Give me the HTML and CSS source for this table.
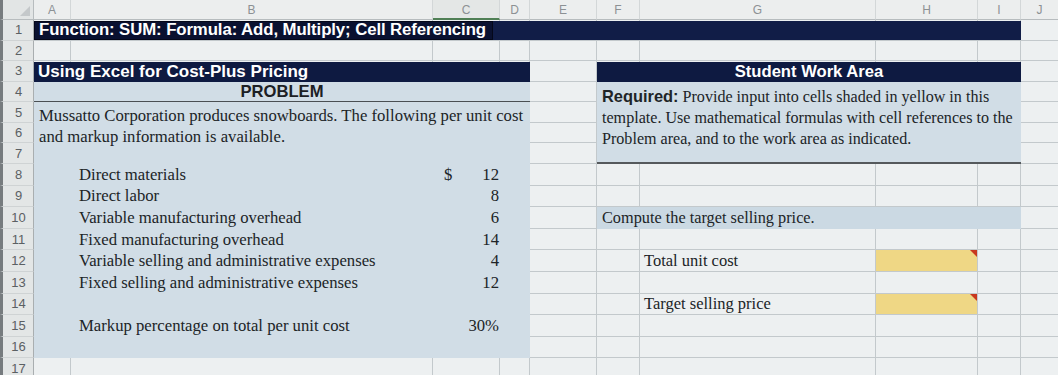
FILE: index.html
```html
<!DOCTYPE html>
<html lang="en">
<head>
<meta charset="utf-8">
<title>Cost-Plus Pricing</title>
<link rel="stylesheet" href="styles.css">
</head>
<body>
<div class="sheet">
  <div class="corner"></div>
  <div class="colhdr">A</div>
  <div class="colhdr">B</div>
  <div class="colhdr sel">C</div>
  <div class="colhdr">D</div>
  <div class="colhdr">E</div>
  <div class="colhdr">F</div>
  <div class="colhdr">G</div>
  <div class="colhdr">H</div>
  <div class="colhdr">I</div>
  <div class="colhdr last">J</div>

  <div class="rowhdr r1">1</div>
  <div class="rowhdr r2">2</div>
  <div class="rowhdr r3">3</div>
  <div class="rowhdr r4">4</div>
  <div class="rowhdr r5">5</div>
  <div class="rowhdr r6">6</div>
  <div class="rowhdr r7">7</div>
  <div class="rowhdr r8">8</div>
  <div class="rowhdr r9">9</div>
  <div class="rowhdr r10">10</div>
  <div class="rowhdr r11">11</div>
  <div class="rowhdr r12">12</div>
  <div class="rowhdr r13">13</div>
  <div class="rowhdr r14">14</div>
  <div class="rowhdr r15">15</div>
  <div class="rowhdr r16">16</div>
  <div class="rowhdr r17">17</div>

  <div class="title"><span class="title-text">Function: SUM: Formula: Add, Multiply; Cell Referencing</span></div>

  <div class="bar bar-left">Using Excel for Cost-Plus Pricing</div>
  <div class="bar bar-right">Student Work Area</div>

  <div class="problem">
    <div class="problem-head">PROBLEM</div>
    <div class="problem-text">Mussatto Corporation produces snowboards. The following per unit cost<br>and markup information is available.</div>
    <div class="item-label i1">Direct materials</div>
    <div class="item-value i1"><span>$</span><span>12</span></div>
    <div class="item-label i2">Direct labor</div>
    <div class="item-value i2"><span></span><span>8</span></div>
    <div class="item-label i3">Variable manufacturing overhead</div>
    <div class="item-value i3"><span></span><span>6</span></div>
    <div class="item-label i4">Fixed manufacturing overhead</div>
    <div class="item-value i4"><span></span><span>14</span></div>
    <div class="item-label i5">Variable selling and administrative expenses</div>
    <div class="item-value i5"><span></span><span>4</span></div>
    <div class="item-label i6">Fixed selling and administrative expenses</div>
    <div class="item-value i6"><span></span><span>12</span></div>
    <div class="item-label i8">Markup percentage on total per unit cost</div>
    <div class="item-value i8 pct"><span></span><span>30%</span></div>
  </div>

  <div class="work-note"><b>Required:</b> Provide input into cells shaded in yellow in this<br>template. Use mathematical formulas with cell references to the<br>Problem area, and to the work area as indicated.</div>

  <div class="compute">Compute the target selling price.</div>

  <div class="work-label w1">Total unit cost</div>
  <div class="input w1"></div>
  <div class="work-label w2">Target selling price</div>
  <div class="input w2"></div>
</div>
</body>
</html>
```

FILE: styles.css
```css
* { box-sizing: border-box; }

html, body {
  margin: 0;
  padding: 0;
  width: 1058px;
  height: 375px;
  overflow: hidden;
  background: #edf0f1;
}

.sheet {
  --grid: #c3c9cc;
  display: grid;
  grid-template-columns: 34px 37px 362px 67px 30px 67px 43px 236px 102px 43px 1fr;
  grid-template-rows: 20px repeat(7, 20.57px) repeat(10, 21.6px);
  width: 1058px;
  height: 380px;
  font-family: "Liberation Serif", "Times New Roman", serif;
  color: #202427;
  background:
    linear-gradient(var(--grid), var(--grid)) 70px 0 / 1px 100% no-repeat,
    linear-gradient(var(--grid), var(--grid)) 432px 0 / 1px 100% no-repeat,
    linear-gradient(var(--grid), var(--grid)) 499px 0 / 1px 100% no-repeat,
    linear-gradient(var(--grid), var(--grid)) 529px 0 / 1px 100% no-repeat,
    linear-gradient(var(--grid), var(--grid)) 596px 0 / 1px 100% no-repeat,
    linear-gradient(var(--grid), var(--grid)) 639px 0 / 1px 100% no-repeat,
    linear-gradient(var(--grid), var(--grid)) 875px 0 / 1px 100% no-repeat,
    linear-gradient(var(--grid), var(--grid)) 977px 0 / 1px 100% no-repeat,
    linear-gradient(var(--grid), var(--grid)) 1020px 0 / 1px 100% no-repeat,
    repeating-linear-gradient(to bottom, transparent 0 19.57px, var(--grid) 19.57px 20.57px) 0 20px / 100% 144px no-repeat,
    repeating-linear-gradient(to bottom, transparent 0 20.6px, var(--grid) 20.6px 21.6px) 0 164px / 100% 216px no-repeat,
    #edf0f1;
}

/* headers */
.corner {
  grid-column: 1;
  grid-row: 1;
  background: #e2e5e5;
  border-left: 3px solid #767b7e;
  border-bottom: 1px solid #b7bcbe;
  border-right: 1px solid #b7bcbe;
  position: relative;
}
.corner::after {
  content: "";
  position: absolute;
  right: 3px;
  bottom: 3px;
  border-style: solid;
  border-width: 0 0 10px 10px;
  border-color: transparent transparent #c4c8ca transparent;
}

.colhdr {
  grid-row: 1;
  background: #eceeee;
  border-right: 1px solid #d3d7d8;
  border-bottom: 1px solid #b7bcbe;
  color: #8c9194;
  font: 12px "Liberation Sans", Arial, sans-serif;
  display: flex;
  align-items: center;
  justify-content: center;
  padding-top: 1px;
}
.colhdr.sel {
  background: #e4e7e6;
  border-bottom: 2px solid #4f7f55;
}
.colhdr.last { border-right: none; }

.rowhdr {
  grid-column: 1;
  background: #e3e6e6;
  border-left: 3px solid #767b7e;
  border-right: 1px solid #a9aeb0;
  border-bottom: 1px solid #cfd3d4;
  color: #5b6063;
  font: 13px "Liberation Sans", Arial, sans-serif;
  display: flex;
  align-items: center;
  justify-content: center;
  padding-left: 1px;
}
.r1 { grid-row: 2; }
.r2 { grid-row: 3; }
.r3 { grid-row: 4; }
.r4 { grid-row: 5; }
.r5 { grid-row: 6; }
.r6 { grid-row: 7; }
.r7 { grid-row: 8; }
.r8 { grid-row: 9; }
.r9 { grid-row: 10; }
.r10 { grid-row: 11; }
.r11 { grid-row: 12; }
.r12 { grid-row: 13; }
.r13 { grid-row: 14; }
.r14 { grid-row: 15; }
.r15 { grid-row: 16; }
.r16 { grid-row: 17; }
.r17 { grid-row: 18; }

/* title rows */
.title {
  grid-column: 2 / 11;
  grid-row: 2;
  margin: 1px 0 1px;
  background: #111d47;
  display: flex;
}
.title-text {
  width: 459px;
  background: #0a1130;
  border: 1px solid #05081a;
  color: #ffffff;
  font: bold 16.8px "Liberation Sans", Arial, sans-serif;
  letter-spacing: -0.1px;
  display: flex;
  align-items: center;
  padding-left: 4px;
  white-space: nowrap;
}

.bar {
  grid-row: 4;
  margin: 1px 0 0;
  background: #0e1a41;
  color: #ffffff;
  font: bold 16.6px "Liberation Sans", Arial, sans-serif;
  display: flex;
  align-items: center;
  white-space: nowrap;
}
.bar-left {
  grid-column: 2 / 6;
  padding-left: 4px;
  font-size: 17px;
}
.bar-right {
  grid-column: 7 / 11;
  justify-content: center;
}

/* problem panel */
.problem {
  grid-column: 2 / 6;
  grid-row: 5 / 18;
  background: #d1dde6;
  display: grid;
  grid-template-columns: 37px 362px 67px 30px;
  grid-template-rows: repeat(4, 20.57px) repeat(9, 21.6px);
}
.problem-head {
  grid-column: 1 / -1;
  grid-row: 1;
  border-bottom: 1px solid #4a4f53;
  font: bold 16.6px "Liberation Sans", Arial, sans-serif;
  color: #1c2024;
  display: flex;
  align-items: center;
  justify-content: center;
  padding-top: 1px;
}
.problem-text {
  grid-column: 1 / -1;
  grid-row: 2 / 4;
  font-size: 16.7px;
  line-height: 20.57px;
  padding: 4px 0 0 5px;
  white-space: nowrap;
}
.item-label {
  grid-column: 2;
  font-size: 16.7px;
  display: flex;
  align-items: center;
  padding-left: 8px;
  white-space: nowrap;
}
.item-value {
  grid-column: 3;
  font-size: 16.7px;
  display: flex;
  align-items: center;
  justify-content: space-between;
  padding: 0 1px 0 11px;
}
.i1 { grid-row: 5; }
.i2 { grid-row: 6; }
.i3 { grid-row: 7; }
.i4 { grid-row: 8; }
.i5 { grid-row: 9; }
.i6 { grid-row: 10; }
.i8 { grid-row: 12; }

/* student work area */
.work-note {
  grid-column: 7 / 11;
  grid-row: 5 / 9;
  background: #d1dde6;
  border-bottom: 2px solid #55595c;
  font-size: 16.1px;
  line-height: 21px;
  padding: 4px 0 0 5px;
  white-space: nowrap;
}
.work-note b {
  font: bold 16.4px "Liberation Sans", Arial, sans-serif;
}

.compute {
  grid-column: 7 / 11;
  grid-row: 11;
  background: #cbd9e3;
  font-size: 16.3px;
  display: flex;
  align-items: center;
  padding-left: 5px;
  white-space: nowrap;
}

.work-label {
  grid-column: 8;
  font-size: 16.5px;
  display: flex;
  align-items: center;
  padding-left: 4px;
  white-space: nowrap;
}
.input {
  grid-column: 9;
  background: #efd785;
  margin-right: 1px;
  margin-bottom: 1px;
  position: relative;
}
.input::after {
  content: "";
  position: absolute;
  top: 0;
  right: 0;
  border-style: solid;
  border-width: 0 7px 7px 0;
  border-color: transparent #c8381f transparent transparent;
}
.w1 { grid-row: 13; }
.w2 { grid-row: 15; }
```
